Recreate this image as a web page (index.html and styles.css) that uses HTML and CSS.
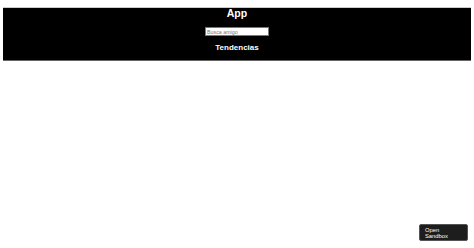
FILE: index.html
```html
<!DOCTYPE html>
<html lang="es">
<head>
    <meta charset="UTF-8">
    <title>App</title>
    <link rel="stylesheet" href="styles.css">
</head>
<body>

    <header class="app-header">
        <h1 class="title">App</h1>
        <input class="search" type="text" placeholder="Busca amigo">
        <h3 class="trends">Tendencias</h3>
    </header>

    <a class="sandbox-btn" href="#">Open<br>Sandbox</a>

</body>
</html>
```

FILE: styles.css
```css
body {
    margin: 0;
    font-family: "Liberation Sans", Arial, sans-serif;
    background: #fff;
}

/* Header */
.app-header {
    margin: 7px 3px 0;
    height: 52px;
    background: #000;
    border-top: 1px solid #ccc;
    border-bottom: 1px solid #666;
    display: flex;
    flex-direction: column;
    align-items: center;
    color: #fff;
}

.title {
    margin: 0;
    font-size: 10.5px;
    line-height: 11px;
}

.search {
    margin-top: 8px;
    width: 60px;
    height: 7px;
    padding: 0 1px;
    border: 0.5px solid #777;
    background: #fff;
    font-family: "Liberation Sans", Arial, sans-serif;
    font-size: 5.3px;
    color: #000;
    outline: none;
}

.search::placeholder {
    color: #777;
}

.trends {
    margin: 6px 0 0;
    font-size: 8px;
    line-height: 11px;
}

/* Sandbox button */
.sandbox-btn {
    position: fixed;
    right: 6px;
    bottom: 7px;
    width: 42px;
    padding: 2px 0 1px 5px;
    background: #1d1d1d;
    border: 0.5px solid #555;
    border-radius: 2px;
    color: #fff;
    font-size: 5.8px;
    line-height: 6px;
    text-decoration: none;
}
```
